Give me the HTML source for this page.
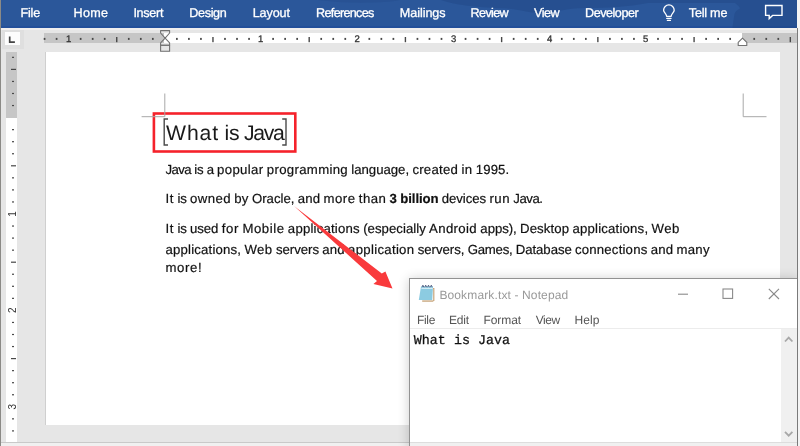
<!DOCTYPE html>
<html lang="en">
<head>
<meta charset="utf-8">
<title>Bookmark text - Word and Notepad</title>
<style>
html,body{margin:0;padding:0}
body{width:800px;height:446px;overflow:hidden;position:relative;background:#e6e6e6;font-family:"Liberation Sans",sans-serif}
.a{position:absolute}
.t{position:absolute;white-space:nowrap;margin:0;padding:0;text-rendering:geometricPrecision}
b{font-weight:bold}
.ln{position:absolute;left:0;top:0;white-space:nowrap;font-size:13.2px;line-height:13.2px}
.w{font-size:13.2px;line-height:13.2px;color:#111;-webkit-text-stroke:.2px #111}
.hd{font-size:21.2px;line-height:21.2px;color:#1a1a1a}
#ribbon{left:1px;top:0;width:796px;height:28px;background:#2b579a;overflow:hidden}
#ribbon .dk{position:absolute;left:0;top:26px;width:100%;height:2px;background:#24509a}
#ledge{left:0;top:0;width:1px;height:446px;background:#8b8a86}
#redge{left:797px;top:28px;width:1px;height:418px;background:#7a7a7a}
#rwhite{left:797px;top:0;width:3px;height:446px;background:#f4f4f4}
#rtop{left:1px;top:28px;width:796px;height:2px;background:#f1efee}
#hr-g1{left:44px;top:33px;width:120px;height:10px;background:#c6c6c6}
#hr-w{left:164px;top:33px;width:577.5px;height:10px;background:#fff}
#hr-g2{left:741.5px;top:33px;width:55.5px;height:10px;background:#c6c6c6}
#tabsel{left:2px;top:30px;width:22px;height:19px;background:#dfdfdf}
#tabsel i{position:absolute;left:3px;top:2px;width:14.5px;height:13px;background:#fdfdfd}
#vr-g{left:6px;top:52px;width:11px;height:65.5px;background:#c6c6c6}
#vr-w{left:6px;top:117.5px;width:11px;height:324.5px;background:#fff}
#page{left:46px;top:52px;width:734px;height:373px;background:#fff}
#pageL{left:45px;top:52px;width:1px;height:373px;background:#cfcfcf}
#bline{left:1px;top:442px;width:796px;height:1px;background:#c9c9c9}
#bbar{left:1px;top:443px;width:796px;height:3px;background:#f0f0f0}
#np-shadow{left:410px;top:279px;width:387px;height:170px;box-shadow:0 1px 11px 1px rgba(0,0,0,.20)}
#np{left:409px;top:278px;width:389px;height:170px;background:#fff;border:1px solid #929292;box-sizing:border-box}
#np-sep{left:410px;top:328px;width:387px;height:1px;background:#ececec}
#np-sb{left:781px;top:329px;width:16px;height:113px;background:#f0f0f0}
#np-bl{left:410px;top:442px;width:387px;height:1px;background:#dddddd}
#np-bb{left:410px;top:443px;width:387px;height:3px;background:#f0f0f0}
#txt{left:0;top:0;width:800px;height:446px;will-change:transform}
svg{position:absolute;left:0;top:0;overflow:visible;will-change:transform}
</style>
</head>
<body>
<div class="a" id="ribbon"><div class="dk"></div>
<svg width="796" height="28" viewBox="1 0 796 28">
<g fill="#1f4583" opacity=".42">
<path d="M318 0 C340 3 380 4 400 0 Z" opacity=".6"/>
<path d="M441 0 C455 5 475 7 495 8 C512 8 522 11 536 13 C552 14 566 8 584 8 C606 8 628 7 648 3 C680 3 710 3 735 3 C737.5 5 740 7 740 8.5 C737 10 735 12 734.5 14 C733.5 20 733 24 732.5 28 L797 28 L797 0 Z"/>
</g>
</svg>
</div>
<div class="a" id="rtop"></div>
<div class="a" id="hr-g1"></div><div class="a" id="hr-w"></div><div class="a" id="hr-g2"></div>
<div class="a" id="tabsel"><i></i></div>
<div class="a" id="vr-g"></div><div class="a" id="vr-w"></div>
<div class="a" id="pageL"></div><div class="a" id="page"></div>
<div class="a" id="bline"></div><div class="a" id="bbar"></div>
<svg width="800" height="446" viewBox="0 0 800 446">
<g fill="#484848">
<rect x="43.72" y="37.9" width="1.7" height="2"/>
<rect x="55.75" y="37.9" width="1.7" height="2"/>
<rect x="79.80" y="37.9" width="1.7" height="2"/>
<rect x="91.83" y="37.9" width="1.7" height="2"/>
<rect x="103.86" y="37.9" width="1.7" height="2"/>
<rect x="116.04" y="37" width="1.4" height="5.2"/>
<rect x="127.92" y="37.9" width="1.7" height="2"/>
<rect x="139.94" y="37.9" width="1.7" height="2"/>
<rect x="151.97" y="37.9" width="1.7" height="2"/>
<rect x="176.03" y="37.9" width="1.7" height="2"/>
<rect x="188.06" y="37.9" width="1.7" height="2"/>
<rect x="200.08" y="37.9" width="1.7" height="2"/>
<rect x="212.26" y="37" width="1.4" height="5.2"/>
<rect x="224.14" y="37.9" width="1.7" height="2"/>
<rect x="236.17" y="37.9" width="1.7" height="2"/>
<rect x="248.20" y="37.9" width="1.7" height="2"/>
<rect x="272.25" y="37.9" width="1.7" height="2"/>
<rect x="284.28" y="37.9" width="1.7" height="2"/>
<rect x="296.31" y="37.9" width="1.7" height="2"/>
<rect x="308.49" y="37" width="1.4" height="5.2"/>
<rect x="320.36" y="37.9" width="1.7" height="2"/>
<rect x="332.39" y="37.9" width="1.7" height="2"/>
<rect x="344.42" y="37.9" width="1.7" height="2"/>
<rect x="368.48" y="37.9" width="1.7" height="2"/>
<rect x="380.50" y="37.9" width="1.7" height="2"/>
<rect x="392.53" y="37.9" width="1.7" height="2"/>
<rect x="404.71" y="37" width="1.4" height="5.2"/>
<rect x="416.59" y="37.9" width="1.7" height="2"/>
<rect x="428.62" y="37.9" width="1.7" height="2"/>
<rect x="440.64" y="37.9" width="1.7" height="2"/>
<rect x="464.70" y="37.9" width="1.7" height="2"/>
<rect x="476.73" y="37.9" width="1.7" height="2"/>
<rect x="488.76" y="37.9" width="1.7" height="2"/>
<rect x="500.93" y="37" width="1.4" height="5.2"/>
<rect x="512.81" y="37.9" width="1.7" height="2"/>
<rect x="524.84" y="37.9" width="1.7" height="2"/>
<rect x="536.87" y="37.9" width="1.7" height="2"/>
<rect x="560.92" y="37.9" width="1.7" height="2"/>
<rect x="572.95" y="37.9" width="1.7" height="2"/>
<rect x="584.98" y="37.9" width="1.7" height="2"/>
<rect x="597.16" y="37" width="1.4" height="5.2"/>
<rect x="609.04" y="37.9" width="1.7" height="2"/>
<rect x="621.06" y="37.9" width="1.7" height="2"/>
<rect x="633.09" y="37.9" width="1.7" height="2"/>
<rect x="657.15" y="37.9" width="1.7" height="2"/>
<rect x="669.18" y="37.9" width="1.7" height="2"/>
<rect x="681.20" y="37.9" width="1.7" height="2"/>
<rect x="693.38" y="37" width="1.4" height="5.2"/>
<rect x="705.26" y="37.9" width="1.7" height="2"/>
<rect x="717.29" y="37.9" width="1.7" height="2"/>
<rect x="729.32" y="37.9" width="1.7" height="2"/>
<rect x="753.37" y="37.9" width="1.7" height="2"/>
<rect x="765.40" y="37.9" width="1.7" height="2"/>
<rect x="777.43" y="37.9" width="1.7" height="2"/>
<rect x="789.61" y="37" width="1.4" height="5.2"/>
<rect x="12" y="56.75" width="2" height="1.2"/>
<rect x="11" y="68.80" width="5" height="1.2"/>
<rect x="12" y="80.85" width="2" height="1.2"/>
<rect x="12" y="92.90" width="2" height="1.2"/>
<rect x="12" y="104.95" width="2" height="1.2"/>
<rect x="12" y="129.05" width="2" height="1.2"/>
<rect x="12" y="141.10" width="2" height="1.2"/>
<rect x="12" y="153.15" width="2" height="1.2"/>
<rect x="11" y="165.20" width="5" height="1.2"/>
<rect x="12" y="177.25" width="2" height="1.2"/>
<rect x="12" y="189.30" width="2" height="1.2"/>
<rect x="12" y="201.35" width="2" height="1.2"/>
<rect x="12" y="225.45" width="2" height="1.2"/>
<rect x="12" y="237.50" width="2" height="1.2"/>
<rect x="12" y="249.55" width="2" height="1.2"/>
<rect x="11" y="261.60" width="5" height="1.2"/>
<rect x="12" y="273.65" width="2" height="1.2"/>
<rect x="12" y="285.70" width="2" height="1.2"/>
<rect x="12" y="297.75" width="2" height="1.2"/>
<rect x="12" y="321.85" width="2" height="1.2"/>
<rect x="12" y="333.90" width="2" height="1.2"/>
<rect x="12" y="345.95" width="2" height="1.2"/>
<rect x="11" y="358.00" width="5" height="1.2"/>
<rect x="12" y="370.05" width="2" height="1.2"/>
<rect x="12" y="382.10" width="2" height="1.2"/>
<rect x="12" y="394.15" width="2" height="1.2"/>
<rect x="12" y="418.25" width="2" height="1.2"/>
<rect x="12" y="430.30" width="2" height="1.2"/>
</g>
<text transform="translate(16 213.90) rotate(-90)" text-anchor="middle" font-family="Liberation Sans, sans-serif" font-size="10" fill="#333">1</text>
<text transform="translate(16 310.30) rotate(-90)" text-anchor="middle" font-family="Liberation Sans, sans-serif" font-size="10" fill="#333">2</text>
<text transform="translate(16 406.70) rotate(-90)" text-anchor="middle" font-family="Liberation Sans, sans-serif" font-size="10" fill="#333">3</text>
<path d="M9.7 36.6 V42.2 H14.9" fill="none" stroke="#444" stroke-width="1.7"/>
<g fill="none" stroke="#727272" stroke-width="1.1" stroke-linejoin="round"><path d="M160.6 30.6 H169.6 V33 L165.1 38.2 L160.6 33 Z"/><path d="M165.1 38.2 L169.6 42.9 V45.3 H160.6 V42.9 Z"/><rect x="160.6" y="45.3" width="9" height="6"/></g>
<path d="M742.5 38.2 L746.8 42.4 V45.5 H738.2 V42.4 Z" fill="#fff" stroke="#727272" stroke-width="1.1" stroke-linejoin="round"/>
<rect x="153.9" y="113.5" width="141.4" height="38" fill="none" stroke="#f5222b" stroke-width="2.6"/>
<g fill="none" stroke="#a8a8a8" stroke-width="1"><path d="M164.8 93.5 V116.7 H141.6"/><path d="M743.2 93.5 V116.7 H766.5"/></g>
<g fill="none" stroke="#4a4a4a" stroke-width="1.4"><path d="M168 119 H164.2 V145 H168"/><path d="M282.2 119 H286 V145 H282.2"/></g>
<g fill="none" stroke="#fff" stroke-width="1.3" stroke-linecap="round" stroke-linejoin="round"><path d="M666.6 16.3 C666.6 13.8 663.6 12.6 663.6 10.2 A5.3 5.3 0 0 1 674.2 10.2 C674.2 12.6 671.2 13.8 671.2 16.3 Z"/><path d="M666.8 18.4 H671 M667.4 20.4 H670.4"/></g>
<path d="M765.6 5.5 H782 V15.4 H772.6 L769.2 18.6 V15.4 H765.6 Z" fill="none" stroke="#fff" stroke-width="1.4" stroke-linejoin="miter"/>
</svg>
<div class="a" id="np-shadow"></div>
<div class="a" id="np"></div>
<div class="a" id="np-sep"></div>
<div class="a" id="np-sb"></div>
<div class="a" id="np-bl"></div><div class="a" id="np-bb"></div>
<div class="a" id="ledge"></div><div class="a" id="rwhite"></div><div class="a" id="redge"></div>
<div class="a" id="txt">
<div class="t" id="t1" style="left:20.40px;top:7.30px;font-size:12.6px;line-height:12.6px;color:#fff;letter-spacing:-0.151px;-webkit-text-stroke:0.3px #fff;">File</div>
<div class="t" id="t2" style="left:73.57px;top:7.30px;font-size:12.6px;line-height:12.6px;color:#fff;letter-spacing:0.290px;-webkit-text-stroke:0.3px #fff;">Home</div>
<div class="t" id="t3" style="left:133.38px;top:7.30px;font-size:12.6px;line-height:12.6px;color:#fff;letter-spacing:-0.285px;-webkit-text-stroke:0.3px #fff;">Insert</div>
<div class="t" id="t4" style="left:189.23px;top:7.30px;font-size:12.6px;line-height:12.6px;color:#fff;letter-spacing:-0.324px;-webkit-text-stroke:0.3px #fff;">Design</div>
<div class="t" id="t5" style="left:252.63px;top:7.30px;font-size:12.6px;line-height:12.6px;color:#fff;letter-spacing:-0.100px;-webkit-text-stroke:0.3px #fff;">Layout</div>
<div class="t" id="t6" style="left:316.11px;top:7.30px;font-size:12.6px;line-height:12.6px;color:#fff;letter-spacing:-0.686px;-webkit-text-stroke:0.3px #fff;">References</div>
<div class="t" id="t7" style="left:399.76px;top:7.30px;font-size:12.6px;line-height:12.6px;color:#fff;letter-spacing:-0.046px;-webkit-text-stroke:0.3px #fff;">Mailings</div>
<div class="t" id="t8" style="left:470.57px;top:7.30px;font-size:12.6px;line-height:12.6px;color:#fff;letter-spacing:-0.638px;-webkit-text-stroke:0.3px #fff;">Review</div>
<div class="t" id="t9" style="left:534.01px;top:7.30px;font-size:12.6px;line-height:12.6px;color:#fff;letter-spacing:-0.467px;-webkit-text-stroke:0.3px #fff;">View</div>
<div class="t" id="t10" style="left:585.00px;top:7.30px;font-size:12.6px;line-height:12.6px;color:#fff;letter-spacing:-0.466px;-webkit-text-stroke:0.3px #fff;">Developer</div>
<div class="t" id="t11" style="left:688.85px;top:7.30px;font-size:12.6px;line-height:12.6px;color:#fff;letter-spacing:-0.225px;-webkit-text-stroke:0.3px #fff;">Tell me</div>
<div class="ln"><span class="t hd" id="h1a" style="left:166.04px;top:123.00px;letter-spacing:0.888px">What</span> <span class="t hd" id="h1b" style="left:224.52px;top:123.00px;letter-spacing:-0.299px">is</span> <span class="t hd" id="h1c" style="left:244.03px;top:123.00px;letter-spacing:-1.303px">Java</span></div>
<div class="t" id="n1" style="left:439.38px;top:288.90px;font-size:12.0px;line-height:12.0px;color:#999;letter-spacing:0.132px;">Bookmark.txt - Notepad</div>
<div class="t" id="n2" style="left:416.91px;top:313.50px;font-size:12.0px;line-height:12.0px;color:#555;letter-spacing:-0.305px;">File</div>
<div class="t" id="n3" style="left:448.91px;top:313.50px;font-size:12.0px;line-height:12.0px;color:#555;letter-spacing:-0.193px;">Edit</div>
<div class="t" id="n4" style="left:483.43px;top:313.50px;font-size:12.0px;line-height:12.0px;color:#555;letter-spacing:-0.062px;">Format</div>
<div class="t" id="n5" style="left:535.73px;top:313.50px;font-size:12.0px;line-height:12.0px;color:#555;letter-spacing:-0.463px;">View</div>
<div class="t" id="n6" style="left:574.43px;top:313.50px;font-size:12.0px;line-height:12.0px;color:#555;letter-spacing:0.108px;">Help</div>
<div class="t" id="n7" style="left:413.79px;top:334.80px;font-size:13.33px;line-height:13.33px;color:#111;letter-spacing:0.028px;font-family:'Liberation Mono', monospace;-webkit-text-stroke:0.25px #111;">What is Java</div>
<div class="t" id="r0" style="left:65.95px;top:34.80px;font-size:9.5px;line-height:9.5px;color:#333;letter-spacing:0.000px;-webkit-text-stroke:0.3px #333;">1</div>
<div class="t" id="r1" style="left:258.04px;top:34.80px;font-size:9.5px;line-height:9.5px;color:#333;letter-spacing:0.000px;-webkit-text-stroke:0.3px #333;">1</div>
<div class="t" id="r2" style="left:354.46px;top:34.80px;font-size:9.5px;line-height:9.5px;color:#333;letter-spacing:0.000px;-webkit-text-stroke:0.3px #333;">2</div>
<div class="t" id="r3" style="left:450.92px;top:34.80px;font-size:9.5px;line-height:9.5px;color:#333;letter-spacing:0.000px;-webkit-text-stroke:0.3px #333;">3</div>
<div class="t" id="r4" style="left:547.02px;top:34.80px;font-size:9.5px;line-height:9.5px;color:#333;letter-spacing:0.000px;-webkit-text-stroke:0.3px #333;">4</div>
<div class="t" id="r5" style="left:643.12px;top:34.80px;font-size:9.5px;line-height:9.5px;color:#333;letter-spacing:0.000px;-webkit-text-stroke:0.3px #333;">5</div>
<div class="ln"><span class="t w" id="b1_0" style="left:165.50px;top:162.70px;letter-spacing:-0.614px">Java</span> <span class="t w" id="b1_1" style="left:194.24px;top:162.70px;letter-spacing:-0.207px">is</span> <span class="t w" id="b1_2" style="left:206.69px;top:162.70px;letter-spacing:-0.303px">a</span> <span class="t w" id="b1_3" style="left:217.04px;top:162.70px;letter-spacing:0.351px">popular</span> <span class="t w" id="b1_4" style="left:266.83px;top:162.70px;letter-spacing:0.317px">programming</span> <span class="t w" id="b1_5" style="left:351.35px;top:162.70px;letter-spacing:-0.024px">language,</span> <span class="t w" id="b1_6" style="left:412.40px;top:162.70px;letter-spacing:0.237px">created</span> <span class="t w" id="b1_7" style="left:461.38px;top:162.70px;letter-spacing:0.412px">in</span> <span class="t w" id="b1_8" style="left:475.79px;top:162.70px;letter-spacing:0.101px">1995.</span></div>
<div class="ln"><span class="t w" id="b2_0" style="left:165.50px;top:192.10px;letter-spacing:0.646px">It</span> <span class="t w" id="b2_1" style="left:177.46px;top:192.10px;letter-spacing:-0.207px">is</span> <span class="t w" id="b2_2" style="left:189.91px;top:192.10px;letter-spacing:0.432px">owned</span> <span class="t w" id="b2_3" style="left:234.24px;top:192.10px;letter-spacing:0.223px">by</span> <span class="t w" id="b2_4" style="left:251.96px;top:192.10px;letter-spacing:-0.006px">Oracle,</span> <span class="t w" id="b2_5" style="left:297.74px;top:192.10px;letter-spacing:0.161px">and</span> <span class="t w" id="b2_6" style="left:323.55px;top:192.10px;letter-spacing:0.469px">more</span> <span class="t w" id="b2_7" style="left:358.81px;top:192.10px;letter-spacing:0.435px">than</span> <b class="t w" id="b2_8" style="left:389.54px;top:192.10px;letter-spacing:0.114px">3</b> <b class="t w" id="b2_9" style="left:400.31px;top:192.10px;letter-spacing:-0.101px">billion</b> <span class="t w" id="b2_10" style="left:441.77px;top:192.10px;letter-spacing:-0.057px">devices</span> <span class="t w" id="b2_11" style="left:489.42px;top:192.10px;letter-spacing:0.501px">run</span> <span class="t w" id="b2_12" style="left:513.32px;top:192.10px;letter-spacing:-0.482px">Java.</span></div>
<div class="ln"><span class="t w" id="b3_0" style="left:165.50px;top:222.30px;letter-spacing:0.646px">It</span> <span class="t w" id="b3_1" style="left:177.46px;top:222.30px;letter-spacing:-0.207px">is</span> <span class="t w" id="b3_2" style="left:189.91px;top:222.30px;letter-spacing:-0.025px">used</span> <span class="t w" id="b3_3" style="left:221.75px;top:222.30px;letter-spacing:0.656px">for</span> <span class="t w" id="b3_4" style="left:242.43px;top:222.30px;letter-spacing:0.541px">Mobile</span> <span class="t w" id="b3_5" style="left:287.85px;top:222.30px;letter-spacing:0.197px">applications</span> <span class="t w" id="b3_6" style="left:363.19px;top:222.30px;letter-spacing:0.026px">(especially</span> <span class="t w" id="b3_7" style="left:429.10px;top:222.30px;letter-spacing:0.353px">Android</span> <span class="t w" id="b3_8" style="left:480.35px;top:222.30px;letter-spacing:-0.050px">apps),</span> <span class="t w" id="b3_9" style="left:520.04px;top:222.30px;letter-spacing:0.115px">Desktop</span> <span class="t w" id="b3_10" style="left:572.55px;top:222.30px;letter-spacing:0.182px">applications,</span> <span class="t w" id="b3_11" style="left:651.55px;top:222.30px;letter-spacing:0.409px">Web</span></div>
<div class="ln"><span class="t w" id="b4_0" style="left:165.50px;top:242.80px;letter-spacing:0.182px">applications,</span> <span class="t w" id="b4_1" style="left:244.51px;top:242.80px;letter-spacing:0.409px">Web</span> <span class="t w" id="b4_2" style="left:275.95px;top:242.80px;letter-spacing:-0.033px">servers</span> <span class="t w" id="b4_3" style="left:322.29px;top:242.80px;letter-spacing:0.161px">and</span> <span class="t w" id="b4_4" style="left:348.10px;top:242.80px;letter-spacing:0.291px">application</span> <span class="t w" id="b4_5" style="left:417.69px;top:242.80px;letter-spacing:-0.027px">servers,</span> <span class="t w" id="b4_6" style="left:467.70px;top:242.80px;letter-spacing:-0.232px">Games,</span> <span class="t w" id="b4_7" style="left:515.81px;top:242.80px;letter-spacing:-0.072px">Database</span> <span class="t w" id="b4_8" style="left:575.00px;top:242.80px;letter-spacing:0.188px">connections</span> <span class="t w" id="b4_9" style="left:650.80px;top:242.80px;letter-spacing:0.161px">and</span> <span class="t w" id="b4_10" style="left:676.60px;top:242.80px;letter-spacing:0.228px">many</span></div>
<div class="ln"><span class="t w" id="b5_0" style="left:165.50px;top:261.10px;letter-spacing:0.599px">more!</span></div>
</div>
<svg width="800" height="446" viewBox="0 0 800 446">
<path d="M294 206 L381.8 273.4 L385.4 271.6 L392.5 288.5 L373.4 284 L377 281 Z" fill="#f93a3c"/>
<g><path d="M422.2 288 L434.4 288 L434.4 300.2 L433 301.7 L422.2 301.7 Z" fill="#c7a67c"/><path d="M422 289 L433.2 289 L433.2 300.4 L422 300.4 Z" fill="#fbfbfb"/><path d="M421 286.6 L433 286.6 L432.2 299.9 L418.8 299.9 Z" fill="#8ccbe1"/><path d="M421.4 288.3 L432.8 288.3" stroke="#dff2f9" stroke-width="1.1"/><path d="M422 287.2 l.9-2 l.9 2 m1 0 l.9-2 l.9 2 m1 0 l.9-2 l.9 2 m1 0 l.9-2 l.9 2" stroke="#46557a" stroke-width=".9" fill="none"/></g>
<g fill="none" stroke="#8a8a8a" stroke-width="1.1"><path d="M678 294.2 H688"/><rect x="723" y="289" width="9.6" height="9.4"/><path d="M768.8 288.9 L779 299 M779 288.9 L768.8 299"/></g>
<g fill="none" stroke="#a8a8a8" stroke-width="1.8"><path d="M785 341.5 L788.7 337.6 L792.4 341.5"/><path d="M785 431.8 L788.7 435.7 L792.4 431.8"/></g>
</svg>
</body>
</html>
